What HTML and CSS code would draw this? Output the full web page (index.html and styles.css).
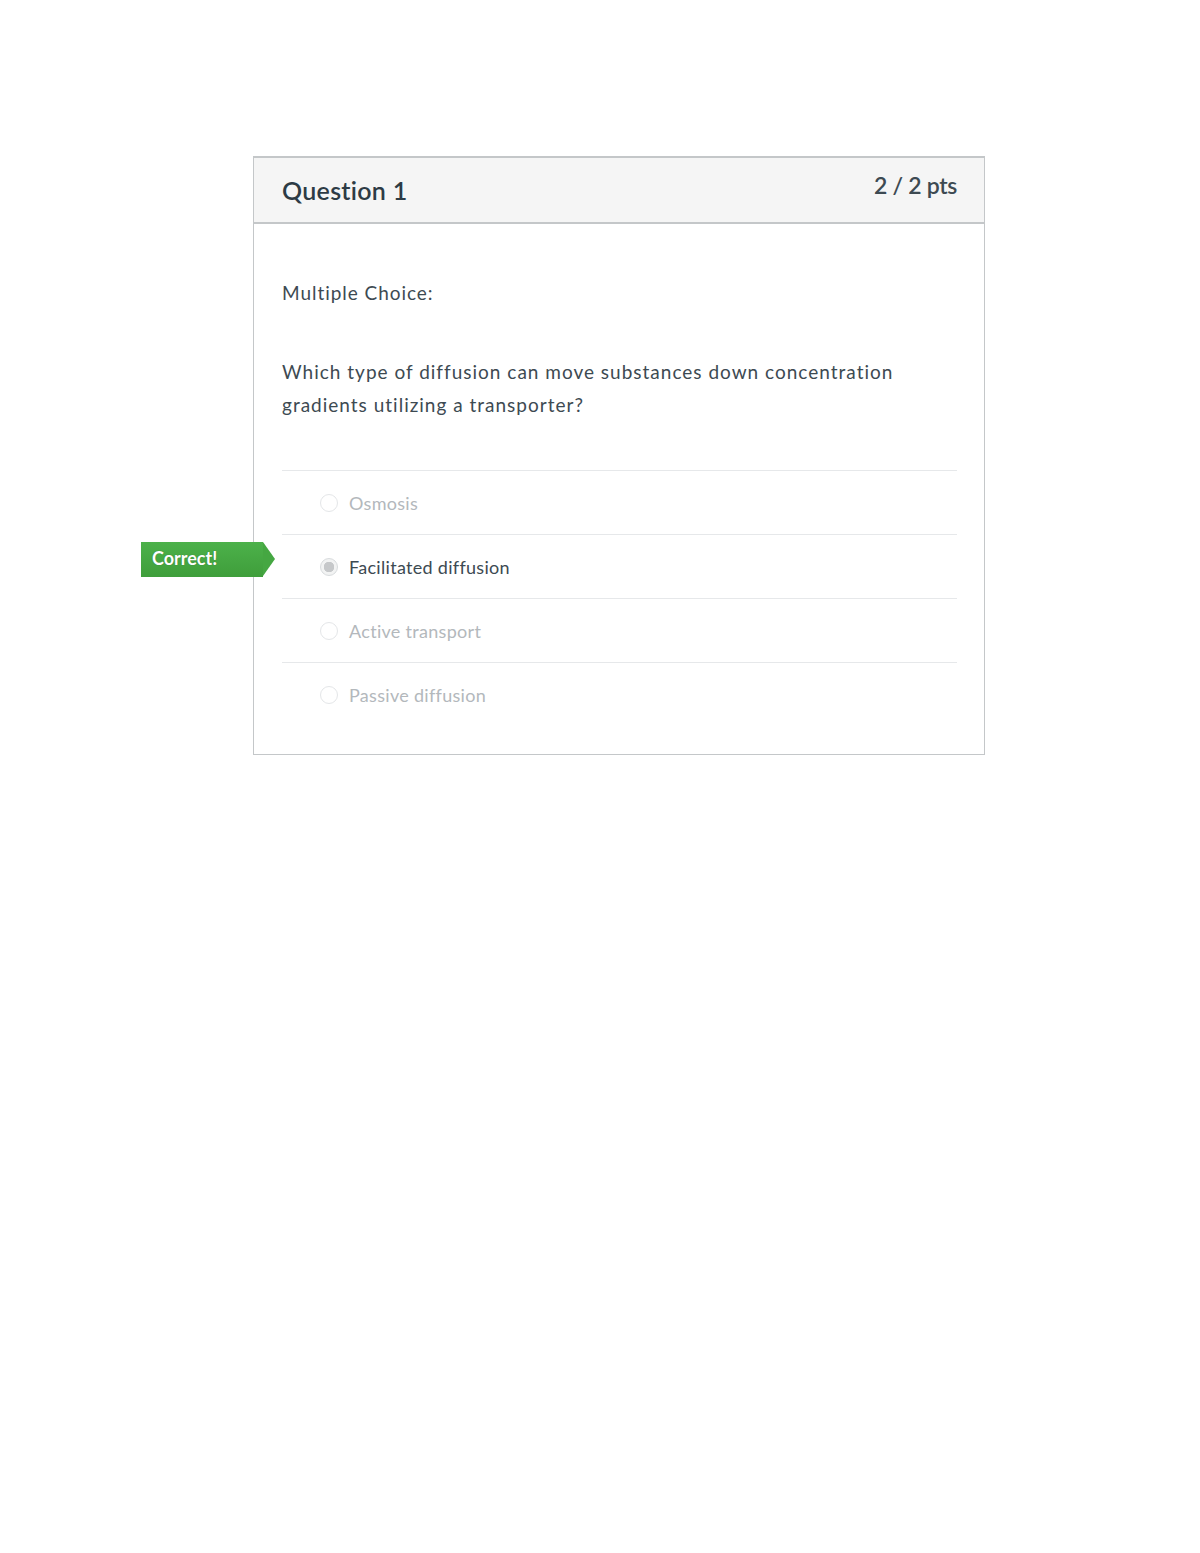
FILE: index.html
```html
<!DOCTYPE html>
<html lang="en">
<head>
<meta charset="utf-8">
<title>Question 1</title>
<link rel="stylesheet" href="styles.css">
</head>
<body>
<div class="page">
  <div class="question">
    <div class="q-header">
      <h2 class="q-title">Question 1</h2>
      <div class="q-pts">2 / 2 pts</div>
    </div>
    <div class="q-body">
      <p class="q-type">Multiple Choice:</p>
      <p class="q-text">Which type of diffusion can move substances down concentration gradients utilizing a transporter?</p>
      <ul class="answers">
        <li class="answer"><span class="radio"></span><span class="label">Osmosis</span></li>
        <li class="answer selected">
          <span class="badge">Correct!</span>
          <span class="radio"></span><span class="label">Facilitated diffusion</span>
        </li>
        <li class="answer"><span class="radio"></span><span class="label">Active transport</span></li>
        <li class="answer"><span class="radio"></span><span class="label">Passive diffusion</span></li>
      </ul>
    </div>
  </div>
</div>
</body>
</html>
```

FILE: styles.css
```css
html, body {
  margin: 0;
  padding: 0;
  background: #ffffff;
}
body {
  font-family: Lato, "Open Sans", sans-serif;
  color: #2d3b45;
}
.page {
  padding-top: 156px;
  padding-left: 253px;
}
.question {
  width: 730px;
  border: 1px solid #c4c7c9;
  border-top-width: 2px;
  background: #fff;
}
.q-header {
  display: flex;
  justify-content: space-between;
  align-items: flex-start;
  background: #f5f5f5;
  border-bottom: 2px solid #c4c7c9;
  height: 64px;
  padding: 0 27px 0 28px;
}
.q-title {
  margin: 0;
  padding-top: 17px;
  font-size: 25px;
  font-weight: 600;
  color: #2d3b45;
  line-height: 30px;
  letter-spacing: 0.3px;
}
.q-pts {
  padding-top: 13px;
  font-size: 23px;
  font-weight: 600;
  color: #3d4a52;
  line-height: 28px;
  letter-spacing: -0.3px;
}
.q-body {
  padding: 55px 27px 28px 28px;
}
.q-type {
  margin: 0;
  font-size: 19px;
  line-height: 28px;
  color: #3d4a52;
  letter-spacing: 0.95px;
}
.q-text {
  margin: 48px 0 0 0;
  font-size: 19px;
  line-height: 33px;
  color: #3d4a52;
  letter-spacing: 1px;
}
.answers {
  list-style: none;
  margin: 49px 0 0 0;
  padding: 0;
}
.answer {
  position: relative;
  display: flex;
  align-items: center;
  height: 63px;
  border-top: 1px solid #e6e8ea;
  padding-left: 38px;
}
.radio {
  width: 18px;
  height: 18px;
  border-radius: 50%;
  border: 1px solid #e4e6e8;
  box-sizing: border-box;
  background: #fff;
  margin-right: 11px;
}
.label {
  font-size: 18px;
  color: #b3b8bc;
  letter-spacing: 0.3px;
}
.answer.selected .radio {
  border: 1px solid #d8dbdd;
  background: radial-gradient(circle, #c6c8ca 0 5px, #f2f3f3 5.5px);
}
.answer.selected .label {
  color: #3d4a52;
}
.badge {
  position: absolute;
  left: -141px;
  top: 7px;
  height: 35px;
  width: 122px;
  background: linear-gradient(#4cb14a, #3f9e3b);
  color: #fff;
  font-weight: 700;
  font-size: 18px;
  line-height: 33px;
  padding-left: 11px;
  box-sizing: border-box;
  letter-spacing: 0;
  text-shadow: 0 0 1px rgba(0,0,0,0.3);
}
.badge::after {
  content: "";
  position: absolute;
  right: -12px;
  top: 0;
  border-style: solid;
  border-width: 17.5px 0 17.5px 12px;
  border-color: transparent transparent transparent #45a742;
}
```
